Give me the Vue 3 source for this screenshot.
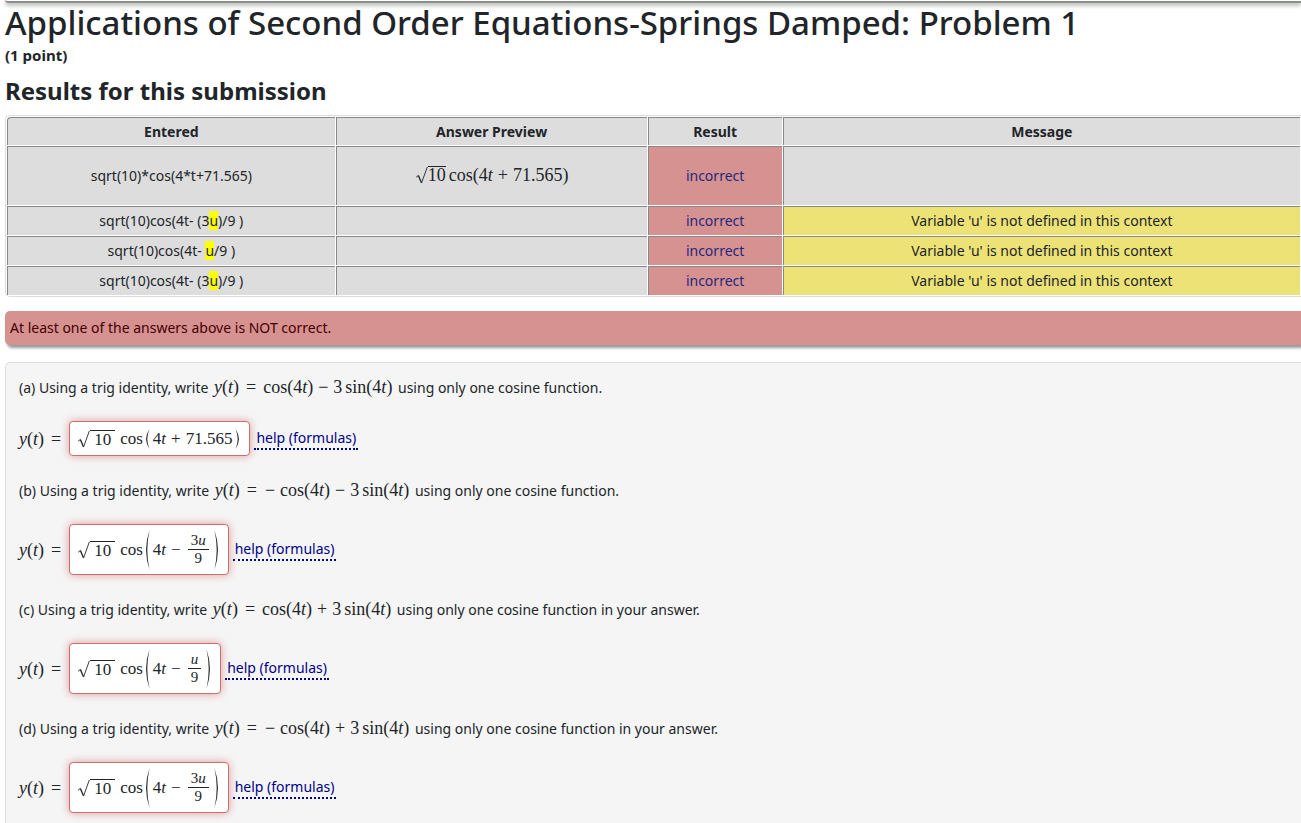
<template>
  <main class="page">
    <div class="nav-edge"></div>
    <h1>Applications of Second Order Equations-Springs Damped: Problem 1</h1>
    <p class="points">(1 point)</p>

    <h2>Results for this submission</h2>
    <table class="results">
      <thead>
        <tr>
          <th class="col-entered">Entered</th>
          <th class="col-preview">Answer Preview</th>
          <th class="col-result">Result</th>
          <th>Message</th>
        </tr>
      </thead>
      <tbody>
        <tr v-for="(row, i) in results" :key="i" :class="{ tall: row.preview }">
          <td>
            {{ row.before }}<mark v-if="row.marked">{{ row.marked }}</mark
            >{{ row.after }}
          </td>
          <td>
            <span v-if="row.preview" class="math preview">
              <svg class="radical" viewBox="0 0 14 20" aria-hidden="true">
                <path class="hook" d="M1 12.5 L3.5 10.5" />
                <path class="stem" d="M3.5 10.5 L7 18.5" />
                <path class="hook" d="M7 19 L13.5 1" />
              </svg>
              <span class="radicand">10</span>
              <span
                v-for="(token, j) in tokenize(row.preview)"
                :key="j"
                :class="token.kind"
                >{{ token.text }}</span
              >
            </span>
          </td>
          <td class="incorrect"><a href="#">incorrect</a></td>
          <td :class="{ warning: row.message }">{{ row.message }}</td>
        </tr>
      </tbody>
    </table>

    <p class="alert">At least one of the answers above is NOT correct.</p>

    <section class="problem">
      <template v-for="part in parts" :key="part.id">
        <p class="question">
          ({{ part.id }}) Using a trig identity, write
          <span class="math">
            <span
              v-for="(token, j) in tokenize(part.formula)"
              :key="j"
              :class="token.kind"
              >{{ token.text }}</span
            >
          </span>
          {{ part.ending }}
        </p>
        <div class="answer">
          <span class="math">
            <span
              v-for="(token, j) in tokenize('y(t)=')"
              :key="j"
              :class="token.kind"
              >{{ token.text }}</span
            >
          </span>
          <div
            class="field"
            :class="{ large: part.top }"
            role="textbox"
            tabindex="0"
            :aria-label="`Answer for part ${part.id}`"
          >
            <svg class="radical" viewBox="0 0 14 20" aria-hidden="true">
              <path class="hook" d="M1 12.5 L3.5 10.5" />
              <path class="stem" d="M3.5 10.5 L7 18.5" />
              <path class="hook" d="M7 19 L13.5 1" />
            </svg>
            <span class="radicand">10</span>
            <span class="fn">cos</span>
            <svg class="paren" viewBox="0 0 6 40" preserveAspectRatio="none" aria-hidden="true">
              <path d="M5.5 0 Q-3 20 5.5 40 Q0 20 5.5 0Z" />
            </svg>
            <span>4<i>t</i></span>
            <template v-if="part.top">
              <span class="sign">−</span>
              <span class="fraction">
                <span class="top"
                  >{{ part.top.replace('u', '') }}<i>u</i></span
                >
                <span>9</span>
              </span>
            </template>
            <template v-else>
              <span class="sign">+</span>
              <span>71.565</span>
            </template>
            <svg class="paren close" viewBox="0 0 6 40" preserveAspectRatio="none" aria-hidden="true">
              <path d="M0.5 0 Q9 20 0.5 40 Q6 20 0.5 0Z" />
            </svg>
          </div>
          <a class="help" href="#">help (formulas)</a>
        </div>
      </template>
    </section>
  </main>
</template>

<script setup>
const message = "Variable 'u' is not defined in this context";

const results = [
  { before: "sqrt(10)*cos(4*t+71.565)", preview: "cos(4t+71.565)" },
  { before: "sqrt(10)cos(4t- (3", marked: "u", after: ")/9 )", message },
  { before: "sqrt(10)cos(4t- ", marked: "u", after: "/9 )", message },
  { before: "sqrt(10)cos(4t- (3", marked: "u", after: ")/9 )", message },
];

const parts = [
  {
    id: "a",
    formula: "y(t)=cos(4t)−3sin(4t)",
    ending: "using only one cosine function.",
  },
  {
    id: "b",
    formula: "y(t)=~cos(4t)−3sin(4t)",
    ending: "using only one cosine function.",
    top: "3u",
  },
  {
    id: "c",
    formula: "y(t)=cos(4t)+3sin(4t)",
    ending: "using only one cosine function in your answer.",
    top: "u",
  },
  {
    id: "d",
    formula: "y(t)=~cos(4t)+3sin(4t)",
    ending: "using only one cosine function in your answer.",
    top: "3u",
  },
];

// "~" stands for a leading minus, which is set tighter than a binary one
function tokenize(formula) {
  return formula.match(/cos|sin|[\d.]+|./g).map((text) => {
    if (text === "~") return { kind: "unary", text: "−" };
    if (text === "=") return { kind: "relation", text };
    if (text === "+" || text === "−") return { kind: "sign", text };
    if (text === "cos" || text === "sin") return { kind: "fn", text };
    if (/[a-z]/.test(text)) return { kind: "variable", text };
    return { kind: "plain", text };
  });
}
</script>

<style>
body {
  overflow: hidden;
  background: #fff;
}
</style>

<style scoped>
.page {
  padding-left: 5px;
  color: #212529;
  font-family: "Noto Sans", "Open Sans", sans-serif;
  font-size: 14px;
  line-height: 24px;
}

.nav-edge {
  height: 1px;
  border-bottom: 2px solid #8a8f8a;
  border-radius: 0 0 0 4px;
  box-shadow: 0 2px 4px #999;
}

h1 {
  margin: 0;
  font-size: 33px;
  font-weight: 500;
  line-height: 40px;
}

.points {
  margin: 0;
  font-size: 15px;
  font-weight: 700;
}

h2 {
  margin: 8px 0;
  font-size: 24px;
  font-weight: 700;
  line-height: 32px;
}

.results {
  width: 100%;
  table-layout: fixed;
  border: 1px solid #ddd;
  border-right: 0;
  border-radius: 5px 0 0 5px;
  border-spacing: 1px;
  text-align: center;
}

.results th,
.results td {
  height: 29px;
  padding: 0;
  border-top: 1px solid #888;
  border-left: 1px solid #888;
  background: #ddd;
  box-sizing: border-box;
}

.results th {
  height: 28px;
}

.results th:first-child {
  border-top-left-radius: 4px;
}

.results .tall td {
  height: 59px;
}

.col-entered {
  width: 25.4%;
}

.col-preview {
  width: 24.1%;
}

.col-result {
  width: 10.4%;
}

.results .incorrect {
  background: #d69191;
}

.results .warning {
  background: #ede275;
}

.incorrect a {
  color: #1f2a7c;
  text-decoration: none;
}

mark {
  background: #ff0;
  color: inherit;
}

.alert {
  margin: 14px 0 17px;
  padding: 5px;
  border-radius: 5px 0 0 5px;
  background: #d69191;
  box-shadow: 2px 3px 3px #999;
  color: #400;
}

.problem {
  display: flex;
  flex-direction: column;
  gap: 22px;
  padding: 12px 13px 22px;
  border: 1px solid #ddd;
  border-right: 0;
  border-radius: 5px 0 0 5px;
  background: #f5f5f5;
}

.question {
  margin: 1px 0 -1px;
}

.math {
  display: inline-flex;
  align-items: baseline;
  font-family: "Liberation Serif", serif;
  font-size: 18px;
  line-height: 20px;
}

.question .math {
  margin: 0 2px;
}

.variable,
i {
  font-style: italic;
}

.relation {
  margin: 0 7px;
}

.sign {
  margin: 0 5px;
}

.unary {
  margin: 0 5px 0 1px;
}

.plain + .fn {
  margin-left: 3px;
}

.answer {
  display: flex;
  align-items: center;
}

.answer .relation {
  margin-right: 8px;
}

.field {
  display: flex;
  align-items: center;
  height: 33px;
  padding: 0 9px 0 7px;
  border: 1px solid #c87070;
  border-radius: 4px;
  background: #fff;
  box-shadow: 0 0 8px #e39a9a;
  font-family: "Liberation Serif", serif;
  font-size: 17px;
}

.field.large {
  height: 49px;
}

.radical {
  width: 13px;
  height: 18px;
  fill: none;
  stroke: #212529;
}

.hook {
  stroke-width: 1;
}

.stem {
  stroke-width: 1.5;
}

.radicand {
  padding: 0 4px;
  border-top: 1px solid #212529;
  line-height: 17px;
}

.field .fn {
  margin-left: 5px;
}

.paren {
  width: 5px;
  height: 20px;
  margin: 0 3px 0 2px;
  fill: #212529;
}

.paren.close {
  margin: 0 0 0 3px;
}

.large .paren {
  height: 40px;
}

.fraction {
  display: flex;
  flex-direction: column;
  margin: 0 2px;
  font-size: 15px;
  line-height: 17px;
  text-align: center;
}

.top {
  padding: 0 3px;
  border-bottom: 1px solid #212529;
}

.preview .radicand {
  padding: 0;
  margin-right: 3px;
}

.preview .radical {
  align-self: center;
}

.help {
  margin-left: 4px;
  padding: 0 2px;
  border-bottom: 2px dotted #00008b;
  color: #00008b;
  line-height: 20px;
  text-decoration: none;
}
</style>
